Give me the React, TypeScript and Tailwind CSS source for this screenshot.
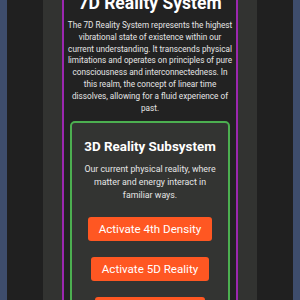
import React from "react";

const buttons = ["Activate 4th Density", "Activate 5D Reality", "Activate 6D Unity"];

export default function App() {
  return (
    <div
      className="flex h-[300px] w-[300px] overflow-hidden bg-[#202020]"
      style={{ fontFamily: "Roboto, 'Liberation Sans', sans-serif" }}
    >
      <div className="w-[7px] shrink-0 bg-[#3e4d6c]" />
      <div className="flex flex-1 justify-center px-[36px]">
        <div className="flex w-full justify-center bg-[#323331] px-[19px]">
          <div className="mt-[-8px] flex w-full flex-col items-center self-start border-x-2 border-[#9c27b0] bg-[#222222] px-[3px] text-center text-[#e6e6e6]">
            <h1 className="text-[17.5px] font-bold leading-[22px] text-white">7D Reality System</h1>
            <p className="mt-[6px] text-[8.2px] leading-[11.8px]">
              The 7D Reality System represents the highest vibrational state of existence within our current
              understanding. It transcends physical limitations and operates on principles of pure consciousness and
              interconnectedness. In this realm, the concept of linear time dissolves, allowing for a fluid experience of
              past.
            </p>
            <div className="mx-[3px] mt-[7px] w-[160px] rounded-[5px] border-2 border-[#4caf50] bg-[#333432] px-[6px] pt-[15px] pb-4">
              <h2 className="whitespace-nowrap text-[13.4px] font-bold leading-[18px] text-white">3D Reality Subsystem</h2>
              <p className="mx-auto mt-[6.5px] w-[136px] text-[8.8px] leading-[13px]">
                Our current physical reality, where matter and energy interact in familiar ways.
              </p>
              <div className="mt-[15.5px] flex flex-col items-center gap-[16px]">
                {buttons.map((b) => (
                  <button
                    key={b}
                    className="h-[24px] rounded-[3px] bg-[#ff5722] px-[11px] text-[11.6px] leading-[24px] text-white"
                  >
                    {b}
                  </button>
                ))}
              </div>
            </div>
          </div>
        </div>
      </div>
      <div className="w-[7px] shrink-0 bg-[#3e4d6c]" />
    </div>
  );
}
